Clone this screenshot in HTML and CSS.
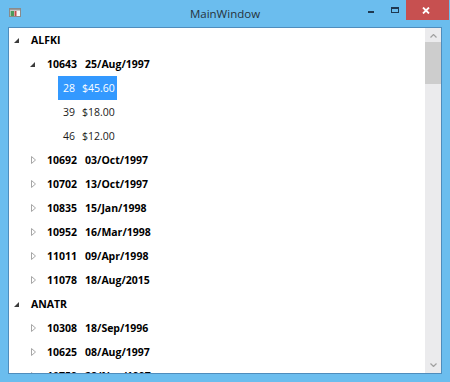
FILE: index.html
```html
<!DOCTYPE html>
<html>
<head>
<meta charset="utf-8">
<link rel="stylesheet" href="styles.css">
</head>
<body>
<div class="window">
  <div class="titlebar">
    <div class="tb-left">
      <svg class="app-icon" width="12" height="9" viewBox="0 0 12 9">
        <rect x="0.5" y="0.5" width="11" height="8" fill="#f4f4f4" stroke="#8a8a8a"/>
        <rect x="1" y="1" width="10" height="1.5" fill="#9a9a9a"/>
        <rect x="1.5" y="3" width="3.5" height="5" fill="#4c9a5a"/>
        <rect x="5.5" y="3" width="2" height="5" fill="#c24a4a"/>
      </svg>
    </div>
    <div class="title">MainWindow</div>
    <div class="tb-right">
      <div class="btn btn-min"><span class="min-bar"></span></div>
      <div class="btn btn-max"><span class="max-box"></span></div>
      <div class="btn btn-close">
        <svg width="8" height="7" viewBox="0 0 8 7"><path d="M1 0.5 L7 6.5 M7 0.5 L1 6.5" stroke="#fff" stroke-width="1.8"/></svg>
      </div>
    </div>
  </div>
  <div class="client">
    <div class="tree">
      <div class="row l0"><span class="exp"><svg width="5" height="5" viewBox="0 0 5 5"><path d="M5 0 L5 5 L0 5 Z" fill="#3c3c3c"/></svg></span><span class="hdr b">ALFKI</span></div>
      <div class="row l1"><span class="exp"><svg width="5" height="5" viewBox="0 0 5 5"><path d="M5 0 L5 5 L0 5 Z" fill="#3c3c3c"/></svg></span><span class="hdr b"><span>10643</span><span>25/Aug/1997</span></span></div>
      <div class="row l2"><span class="exp"></span><span class="hdr sel"><span>28</span><span>$45.60</span></span></div>
      <div class="row l2"><span class="exp"></span><span class="hdr"><span>39</span><span>$18.00</span></span></div>
      <div class="row l2"><span class="exp"></span><span class="hdr"><span>46</span><span>$12.00</span></span></div>
      <div class="row l1"><span class="exp"><svg class="col" width="5" height="8" viewBox="0 0 5 8"><path d="M0.5 0.5 L4.5 4 L0.5 7.5 Z" fill="#fff" stroke="#a6a6a6"/></svg></span><span class="hdr b"><span>10692</span><span>03/Oct/1997</span></span></div>
      <div class="row l1"><span class="exp"><svg class="col" width="5" height="8" viewBox="0 0 5 8"><path d="M0.5 0.5 L4.5 4 L0.5 7.5 Z" fill="#fff" stroke="#a6a6a6"/></svg></span><span class="hdr b"><span>10702</span><span>13/Oct/1997</span></span></div>
      <div class="row l1"><span class="exp"><svg class="col" width="5" height="8" viewBox="0 0 5 8"><path d="M0.5 0.5 L4.5 4 L0.5 7.5 Z" fill="#fff" stroke="#a6a6a6"/></svg></span><span class="hdr b"><span>10835</span><span>15/Jan/1998</span></span></div>
      <div class="row l1"><span class="exp"><svg class="col" width="5" height="8" viewBox="0 0 5 8"><path d="M0.5 0.5 L4.5 4 L0.5 7.5 Z" fill="#fff" stroke="#a6a6a6"/></svg></span><span class="hdr b"><span>10952</span><span>16/Mar/1998</span></span></div>
      <div class="row l1"><span class="exp"><svg class="col" width="5" height="8" viewBox="0 0 5 8"><path d="M0.5 0.5 L4.5 4 L0.5 7.5 Z" fill="#fff" stroke="#a6a6a6"/></svg></span><span class="hdr b"><span>11011</span><span>09/Apr/1998</span></span></div>
      <div class="row l1"><span class="exp"><svg class="col" width="5" height="8" viewBox="0 0 5 8"><path d="M0.5 0.5 L4.5 4 L0.5 7.5 Z" fill="#fff" stroke="#a6a6a6"/></svg></span><span class="hdr b"><span>11078</span><span>18/Aug/2015</span></span></div>
      <div class="row l0"><span class="exp"><svg width="5" height="5" viewBox="0 0 5 5"><path d="M5 0 L5 5 L0 5 Z" fill="#3c3c3c"/></svg></span><span class="hdr b">ANATR</span></div>
      <div class="row l1"><span class="exp"><svg class="col" width="5" height="8" viewBox="0 0 5 8"><path d="M0.5 0.5 L4.5 4 L0.5 7.5 Z" fill="#fff" stroke="#a6a6a6"/></svg></span><span class="hdr b"><span>10308</span><span>18/Sep/1996</span></span></div>
      <div class="row l1"><span class="exp"><svg class="col" width="5" height="8" viewBox="0 0 5 8"><path d="M0.5 0.5 L4.5 4 L0.5 7.5 Z" fill="#fff" stroke="#a6a6a6"/></svg></span><span class="hdr b"><span>10625</span><span>08/Aug/1997</span></span></div>
      <div class="row l1"><span class="exp"><svg class="col" width="5" height="8" viewBox="0 0 5 8"><path d="M0.5 0.5 L4.5 4 L0.5 7.5 Z" fill="#fff" stroke="#a6a6a6"/></svg></span><span class="hdr b"><span>10759</span><span>28/Nov/1997</span></span></div>
    </div>
    <div class="scrollbar">
      <div class="sb-btn sb-up"><svg width="7" height="4" viewBox="0 0 7 4"><path d="M0.5 3.5 L3.5 0.5 L6.5 3.5" fill="none" stroke="#a0a0a0" stroke-width="1.2"/></svg></div>
      <div class="sb-thumb"></div>
      <div class="sb-track"></div>
      <div class="sb-btn sb-down"><svg width="7" height="4" viewBox="0 0 7 4"><path d="M0.5 0.5 L3.5 3.5 L6.5 0.5" fill="none" stroke="#a0a0a0" stroke-width="1.2"/></svg></div>
    </div>
  </div>
</div>
</body>
</html>
```

FILE: styles.css
```css
html, body {
  margin: 0;
  padding: 0;
}
body {
  width: 450px;
  height: 382px;
  overflow: hidden;
  background: #6bbdee;
  font-family: "Open Sans", "Noto Sans", sans-serif;
}
.window {
  width: 450px;
  height: 382px;
  display: flex;
  flex-direction: column;
  background: #6bbdee;
}
.titlebar {
  height: 27px;
  display: grid;
  grid-template-columns: 1fr auto 1fr;
  flex: none;
}
.tb-left {
  padding: 8px 0 0 9px;
}
.app-icon {
  display: block;
}
.title {
  font-size: 11.5px;
  color: #26323c;
  line-height: 27px;
  padding-bottom: 1px;
}
.tb-right {
  display: flex;
  justify-content: flex-end;
  align-items: flex-start;
  padding-right: 1px;
}
.btn {
  height: 20px;
  display: flex;
  align-items: center;
  justify-content: center;
}
.btn-min {
  width: 26px;
  padding-top: 4px;
  box-sizing: border-box;
}
.min-bar {
  width: 6px;
  height: 2px;
  background: #1f3850;
}
.btn-max {
  width: 22px;
}
.max-box {
  width: 8px;
  height: 6px;
  box-sizing: border-box;
  border: 1px solid #1f3850;
  border-top-width: 2px;
}
.btn-close {
  width: 43px;
  background: #c75050;
  padding-right: 4px;
  box-sizing: border-box;
}
.btn-close svg {
  display: block;
}
.client {
  flex: none;
  height: 347px;
  margin: 0 8px;
  box-sizing: border-box;
  border: 1px solid #4f8dbd;
  background: #fff;
  display: flex;
  overflow: hidden;
}
.tree {
  flex: 1;
  padding-top: 0;
  overflow: hidden;
}
.row {
  height: 24px;
  display: flex;
  align-items: stretch;
  font-size: 10.5px;
  color: #1a1a1a;
}
.row.l0 { padding-left: 0; }
.row.l1 { padding-left: 16px; }
.row.l2 { padding-left: 32px; }
.exp {
  width: 14px;
  display: flex;
  align-items: center;
  justify-content: center;
  margin-right: 3px;
}
.exp svg {
  display: block;
}
.exp svg.col {
  margin-left: 2px;
}
.hdr {
  display: flex;
  align-items: center;
  gap: 7px;
  padding: 0 2px 0 5px;
  line-height: 24px;
}
.hdr.b {
  font-weight: bold;
  color: #000;
  gap: 8px;
}
.hdr.sel {
  background: #3399ff;
  color: #fff;
}
.scrollbar {
  width: 16px;
  flex: none;
  background: #ebebed;
  display: flex;
  flex-direction: column;
}
.sb-btn {
  display: flex;
  align-items: center;
  justify-content: center;
}
.sb-up {
  height: 14px;
  padding-top: 2px;
  box-sizing: border-box;
}
.sb-down {
  height: 17px;
}
.sb-thumb {
  height: 42px;
  background: #cdcdcd;
}
.sb-track {
  flex: 1;
}
```
